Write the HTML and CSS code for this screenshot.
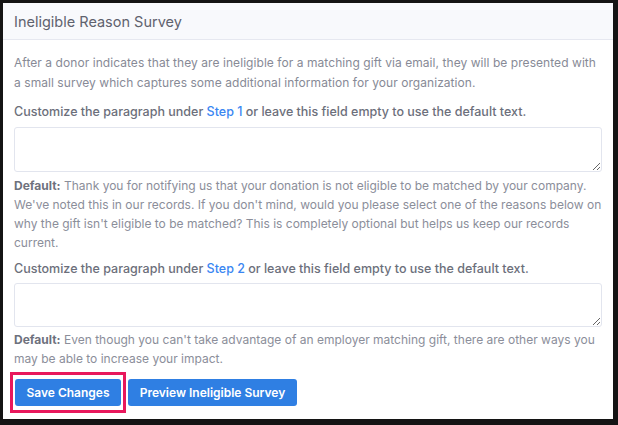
FILE: index.html
```html
<!DOCTYPE html>
<html lang="en">
<head>
<meta charset="utf-8">
<title>Ineligible Reason Survey</title>
<link rel="stylesheet" href="styles.css">
</head>
<body>
<div class="card">
  <div class="card-header">Ineligible Reason Survey</div>
  <div class="card-body">
    <p class="intro">After a donor indicates that they are ineligible for a matching gift via email, they will be presented with a small survey which captures some additional information for your organization.</p>
    <p class="label">Customize the paragraph under <a class="link" href="#">Step 1</a> or leave this field empty to use the default text.</p>
    <textarea class="field field-1"></textarea>
    <p class="default default-1"><strong>Default:</strong> Thank you for notifying us that your donation is not eligible to be matched by your company. We've noted this in our records. If you don't mind, would you please select one of the reasons below on why the gift isn't eligible to be matched? This is completely optional but helps us keep our records current.</p>
    <p class="label label-2">Customize the paragraph under <a class="link" href="#">Step 2</a> or leave this field empty to use the default text.</p>
    <textarea class="field field-2"></textarea>
    <p class="default default-2"><strong>Default:</strong> Even though you can't take advantage of an employer matching gift, there are other ways you may be able to increase your impact.</p>
    <div class="actions">
      <span class="highlight"><button class="btn btn-save">Save Changes</button></span>
      <button class="btn btn-preview">Preview Ineligible Survey</button>
    </div>
  </div>
</div>
</body>
</html>
```
FILE: styles.css
```css
html, body {
  margin: 0;
  padding: 0;
  background: #141414;
}
body {
  font-family: Inter, "Noto Sans", sans-serif;
  width: 618px;
  height: 425px;
  overflow: hidden;
}
.card {
  margin: 3px 5px 6px 3px;
  height: 416px;
  background: #ffffff;
  box-sizing: border-box;
}
.card-header {
  height: 37px;
  box-sizing: border-box;
  background: #f8f9fc;
  border-bottom: 1px solid #e6e8f0;
  padding: 0 11px;
  display: flex;
  align-items: center;
  font-size: 14.5px;
  color: #5f626e;
}
.card-body {
  padding: 13px 11px 0 11px;
}
p {
  margin: 0;
}
.intro {
  font-size: 12px;
  line-height: 20px;
  letter-spacing: 0.06px;
  color: #878a96;
  margin-bottom: 9px;
}
.label {
  font-size: 12.5px;
  line-height: 20px;
  font-weight: 500;
  color: #6c6f7b;
  margin-bottom: 5px;
}
.label-2 {
  margin-bottom: 4px;
}
.link {
  color: #3a86f2;
  text-decoration: none;
}
.field {
  display: block;
  width: 588px;
  box-sizing: border-box;
  border: 1px solid #e2e5ee;
  border-radius: 3px;
  background: #fff;
  margin: 0;
}
.field-1 {
  height: 45px;
  margin-bottom: 4px;
}
.field-2 {
  height: 44px;
  margin-bottom: 3px;
}
.default {
  font-size: 12px;
  line-height: 19px;
  color: #8b8e9a;
}
.default strong {
  font-weight: 700;
  color: #6e717d;
}
.default-1 {
  margin-bottom: 7px;
}
.default-2 {
  margin-bottom: 4px;
}
.actions {
  display: flex;
  align-items: center;
  gap: 2px;
  margin-left: -4px;
}
.highlight {
  display: inline-flex;
  border: 3px solid #e8185c;
  padding: 4px 2px;
}
.btn {
  height: 27px;
  border: none;
  border-radius: 3px;
  background: #2f7fe3;
  color: #ffffff;
  font-family: Inter, "Noto Sans", sans-serif;
  font-size: 12px;
  font-weight: 600;
  padding: 0;
  cursor: pointer;
}
.btn-save {
  width: 106px;
}
.btn-preview {
  width: 169px;
}
```
